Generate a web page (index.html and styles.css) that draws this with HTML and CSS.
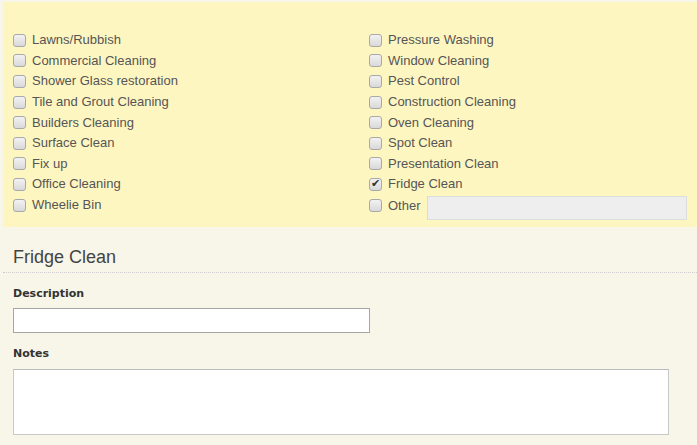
FILE: index.html
```html
<!DOCTYPE html>
<html lang="en">
<head>
  <meta charset="UTF-8" />
  <title>Service Options</title>
  <link rel="stylesheet" href="styles.css">
</head>
<body>

  <!-- Service checklist -->
  <div class="services">
    <div class="col">
      <label class="opt"><input type="checkbox" /> Lawns/Rubbish</label>
      <label class="opt"><input type="checkbox" /> Commercial Cleaning</label>
      <label class="opt"><input type="checkbox" /> Shower Glass restoration</label>
      <label class="opt"><input type="checkbox" /> Tile and Grout Cleaning</label>
      <label class="opt"><input type="checkbox" /> Builders Cleaning</label>
      <label class="opt"><input type="checkbox" /> Surface Clean</label>
      <label class="opt"><input type="checkbox" /> Fix up</label>
      <label class="opt"><input type="checkbox" /> Office Cleaning</label>
      <label class="opt"><input type="checkbox" /> Wheelie Bin</label>
    </div>
    <div class="col">
      <label class="opt"><input type="checkbox" /> Pressure Washing</label>
      <label class="opt"><input type="checkbox" /> Window Cleaning</label>
      <label class="opt"><input type="checkbox" /> Pest Control</label>
      <label class="opt"><input type="checkbox" /> Construction Cleaning</label>
      <label class="opt"><input type="checkbox" /> Oven Cleaning</label>
      <label class="opt"><input type="checkbox" /> Spot Clean</label>
      <label class="opt"><input type="checkbox" /> Presentation Clean</label>
      <label class="opt"><input type="checkbox" checked /> Fridge Clean</label>
      <div class="opt other">
        <label><input type="checkbox" /> Other</label>
        <input type="text" class="other-input" />
      </div>
    </div>
  </div>

  <!-- Selected service details -->
  <div class="details">
    <h2>Fridge Clean</h2>
    <div class="field">
      <label for="desc">Description</label>
      <input type="text" id="desc" class="desc-input" />
    </div>
    <div class="field">
      <label for="notes">Notes</label>
      <textarea id="notes"></textarea>
    </div>
  </div>

</body>
</html>
```

FILE: styles.css
```css
:root {
  --cream: #f8f5e9;
  --yellow: #fef6c1;
  --text: #555;
  --heading: #444;
}

* {
  margin: 0;
  padding: 0;
  box-sizing: border-box;
}

body {
  font-family: "Liberation Sans", Arial, sans-serif;
  background: var(--cream);
  color: var(--text);
  width: 697px;
  height: 445px;
  overflow: hidden;
}

.services {
  margin: 2px 0 0 3px;
  background: var(--yellow);
  padding: 28px 10px 9px 10px;
  display: grid;
  grid-template-columns: 356px 1fr;
}

.col {
  display: flex;
  flex-direction: column;
}

.opt {
  display: flex;
  align-items: center;
  height: 20.6px;
  font-size: 13px;
  line-height: 16px;
  color: var(--text);
}

.opt label {
  display: flex;
  align-items: center;
}

.opt input[type="checkbox"] {
  appearance: none;
  -webkit-appearance: none;
  width: 13px;
  height: 13px;
  margin-right: 6px;
  border: 1px solid #a9a9a9;
  border-radius: 3px;
  background: linear-gradient(#f2f2f2, #d9d9d9);
  position: relative;
  flex: none;
}

.opt input[type="checkbox"]:checked::after {
  content: "\2714";
  position: absolute;
  left: 1px;
  top: -2px;
  font-size: 11px;
  color: #333;
}

.other {
  height: 24px;
  margin-top: -1px;
}

.other-input {
  margin-left: 6px;
  width: 260px;
  height: 24px;
  background: #eee;
  border: 1px solid #ddd;
  margin-top: 5px;
}

.details h2 {
  margin: 19px 0 0 3px;
  padding: 0 10px 4px;
  font-size: 18px;
  line-height: 22px;
  font-weight: normal;
  color: var(--heading);
  border-bottom: 1px dotted #ccc;
}

.field {
  padding: 0 13px;
}

.field label {
  display: block;
  margin-top: 13px;
  font-family: "DejaVu Sans", Verdana, sans-serif;
  font-size: 11px;
  line-height: 16px;
  font-weight: bold;
  color: #333;
}

.desc-input {
  display: block;
  margin-top: 6px;
  width: 357px;
  height: 25px;
  background: #fff;
  border: 1px solid #a6a6a6;
}

textarea {
  display: block;
  margin-top: 7px;
  width: 656px;
  height: 66px;
  background: #fff;
  border: 1px solid #c8c8c8;
  border-top-color: #bbb;
  resize: none;
}
```
